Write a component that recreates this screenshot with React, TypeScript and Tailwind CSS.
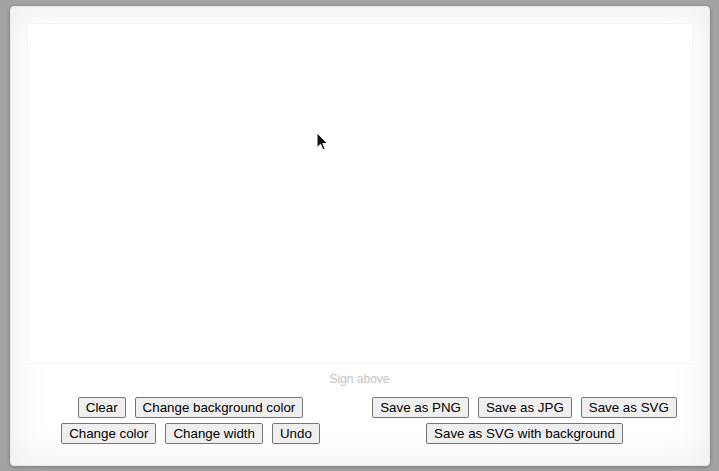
const font = "font-['Liberation_Sans',Arial,Helvetica,sans-serif]"

function Btn({ children }: { children: string }) {
  return (
    <button
      type="button"
      className="my-[2.5px] h-[21px] rounded-[2px] border border-[#767676] bg-[#efefef] px-[7px] text-[13.33px] leading-none text-black"
    >
      {children}
    </button>
  )
}

function Cursor() {
  return (
    <svg
      className="absolute left-[288px] top-[108px]"
      width="13"
      height="20"
      viewBox="0 0 13 20"
    >
      <path
        d="M1 1 L1 15.5 L4.5 12.3 L7 18 L9.2 17 L6.8 11.5 L11.5 11.5 Z"
        fill="#111"
        stroke="#fff"
        strokeWidth="1"
        strokeLinejoin="round"
      />
    </svg>
  )
}

export default function App() {
  return (
    <div className={`flex h-[471px] w-full items-center justify-center overflow-hidden bg-[#a3a3a3] ${font}`}>
      <div className="relative flex h-[460px] w-[700px] flex-col rounded-[4px] border border-[#e8e8e8] bg-white px-4 pb-[17px] pt-4 text-[10px] shadow-[0_1px_4px_rgba(0,0,0,0.27),inset_0_0_40px_rgba(0,0,0,0.08)]">
        {/* canvas */}
        <div className="relative flex-1 border border-[#f4f4f4] bg-white">
          <Cursor />
        </div>

        <div className="mt-2 text-center text-[12px] leading-[14px] text-[#c3c3c3]">
          Sign above
        </div>

        {/* actions */}
        <div className="mt-2 flex justify-between">
          <div className="w-[328px] p-[1px]">
            <div className="flex justify-center gap-[9px]">
              <Btn>Clear</Btn>
              <Btn>Change background color</Btn>
            </div>
            <div className="flex justify-center gap-[9px]">
              <Btn>Change color</Btn>
              <Btn>Change width</Btn>
              <Btn>Undo</Btn>
            </div>
          </div>
          <div className="w-[336px] p-[1px]">
            <div className="flex justify-center gap-[9px]">
              <Btn>Save as PNG</Btn>
              <Btn>Save as JPG</Btn>
              <Btn>Save as SVG</Btn>
            </div>
            <div className="flex justify-center gap-[9px]">
              <Btn>Save as SVG with background</Btn>
            </div>
          </div>
        </div>
      </div>
    </div>
  )
}
